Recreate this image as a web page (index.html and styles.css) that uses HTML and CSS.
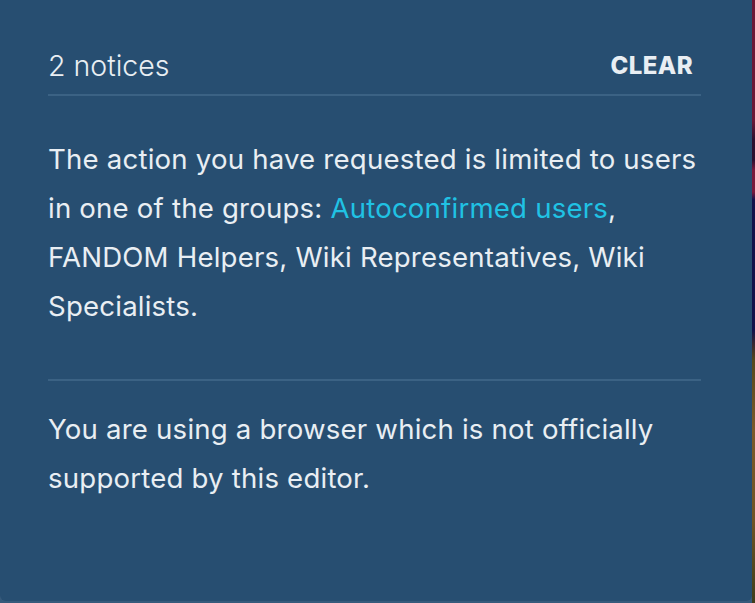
FILE: index.html
```html
<!DOCTYPE html>
<html>
<head>
<meta charset="utf-8">
<link rel="stylesheet" href="styles.css">
</head>
<body>
<div class="page">
  <div class="panel">
    <div class="panel-header">
      <span class="count">2 notices</span>
      <span class="clear">CLEAR</span>
    </div>
    <div class="notice notice-first">
      The action you have requested is limited to users in one of the groups: <a class="link" href="#">Autoconfirmed users</a>, FANDOM Helpers, Wiki Representatives, Wiki Specialists.
    </div>
    <div class="notice notice-second">
      You are using a browser which is not officially supported by this editor.
    </div>
  </div>
</div>
</body>
</html>
```
FILE: styles.css
```css
html, body {
  margin: 0;
  padding: 0;
}
body {
  width: 755px;
  height: 603px;
  overflow: hidden;
  background: linear-gradient(to bottom,
    #6c1838 0, #6c1838 120px, #2c1030 140px, #2c1030 160px, #7a1a3c 170px, #7a1a3c 192px,
    #12124c 200px, #12124c 330px, #3a2a30 345px, #54491f 360px, #7a5a2a 430px,
    #6e5426 520px, #3e3e1c 603px);
  font-family: Inter, "Noto Sans", sans-serif;
}
.page {
  width: 752px;
  height: 603px;
  background: #365a7b;
}
.panel {
  box-sizing: border-box;
  width: 752px;
  height: 601px;
  background: #274e71;
  border-radius: 0 0 6px 6px;
  padding: 0 51px 0 48px;
  color: #e9eef3;
}
.panel-header {
  display: flex;
  justify-content: space-between;
  align-items: flex-start;
  height: 96px;
  padding-top: 38px;
  box-sizing: border-box;
  border-bottom: 2px solid #3b6284;
}
.count {
  font-size: 28.5px;
  font-weight: 300;
  line-height: 56px;
}
.clear {
  font-size: 24px;
  font-weight: 800;
  letter-spacing: 0.4px;
  line-height: 56px;
  margin-right: 8px;
}
.notice {
  font-size: 27.6px;
  line-height: 49px;
  letter-spacing: 0.2px;
}
.notice-first {
  padding: 39px 0 48px;
  border-bottom: 2px solid #3b6284;
}
.notice-second {
  padding-top: 24px;
}
.link {
  color: #20c2e4;
  text-decoration: none;
}
```
